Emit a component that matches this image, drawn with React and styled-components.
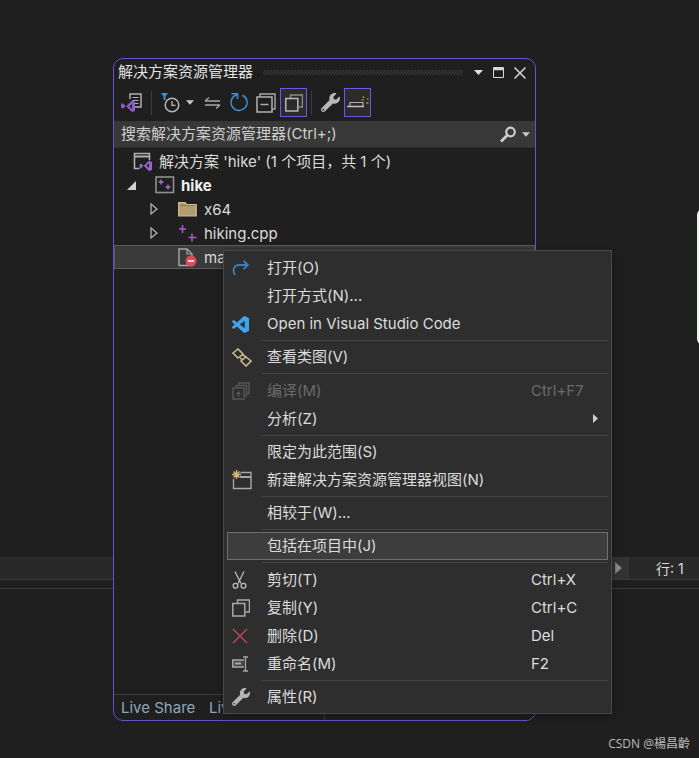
import React from 'react';
import styled, { createGlobalStyle } from 'styled-components';
import { FaWrench } from 'react-icons/fa';

const GlobalStyle = createGlobalStyle`
  html, body {
    margin: 0;
    padding: 0;
    background: #1f1f1f;
  }
  body {
    font-family: Inter, "Noto Sans CJK SC", sans-serif;
    font-size: 15px;
    color: #d6d6d6;
  }
`;

const Desktop = styled.div`
  position: relative;
  width: 699px;
  height: 758px;
  overflow: hidden;
  background: #1f1f1f;
  display: flex;
  flex-direction: column;
`;

const StatusBar = styled.div`
  margin-top: 557px;
  height: 22px;
  background: #292929;
  border-bottom: 1px solid #3a3a3a;
  box-sizing: content-box;
  display: flex;
  justify-content: flex-end;
`;

const ScrollEnd = styled.div`
  width: 17px;
  background: #333333;
  display: flex;
  align-items: center;
  padding-left: 3px;
  box-sizing: border-box;
`;

const LineInfo = styled.div`
  width: 70px;
  padding-left: 27px;
  box-sizing: border-box;
  line-height: 23px;
  font-size: 14px;
  color: #dcdcdc;
`;

const OutputEdge = styled.div`
  margin-top: 8px;
  border-top: 1px solid #3a3a3a;
  flex: 1;
  position: relative;
`;

const Watermark = styled.div`
  position: absolute;
  right: 9px;
  bottom: 5px;
  font-size: 12px;
  line-height: 18px;
  color: #bcbcbc;
  font-family: "Open Sans", "Noto Sans CJK TC", sans-serif;
`;

const WindowSliver = styled.div`
  position: absolute;
  left: 697px;
  top: 209px;
  width: 12px;
  height: 136px;
  background: #eef1ee;
  border-radius: 8px;
`;

const ToolWindow = styled.div`
  position: absolute;
  left: 113px;
  top: 58px;
  width: 423px;
  height: 663px;
  box-sizing: border-box;
  border: 1px solid #6552c9;
  border-radius: 10px;
  background: #1f1f1f;
  display: flex;
  flex-direction: column;
  overflow: hidden;
`;

const TitleBar = styled.div`
  height: 27px;
  display: flex;
  align-items: center;
  padding: 0 8px 0 4px;
  color: #e2e2e2;
`;

const TitleText = styled.div`
  width: 145px;
  white-space: nowrap;
  line-height: 24px;
  margin-top: -2px;
`;

const Grip = styled.div`
  width: 200px;
  height: 5px;
  background-image:
    linear-gradient(45deg, #3f3f3f 25%, transparent 25%, transparent 75%, #3f3f3f 75%),
    linear-gradient(45deg, #3f3f3f 25%, transparent 25%, transparent 75%, #3f3f3f 75%);
  background-size: 3px 3px;
  background-position: 0 0, 1.5px 1.5px;
`;

const TitleIcons = styled.div`
  margin-left: 11px;
  display: flex;
  align-items: center;
  gap: 10px;
`;

const Toolbar = styled.div`
  height: 33px;
  padding-left: 6px;
  display: flex;
  align-items: center;
`;

const ToolButton = styled.div`
  width: ${p => p.$w}px;
  height: 29px;
  box-sizing: border-box;
  display: flex;
  align-items: center;
  justify-content: center;
  border: 1px solid ${p => (p.$on ? '#6a5ae0' : 'transparent')};
  background: ${p => (p.$on ? '#2b2b2b' : 'transparent')};
`;

const ToolSep = styled.div`
  width: 1px;
  height: 24px;
  margin: 0 ${p => p.$m}px;
  background: #3d3d3d;
`;

const SearchBar = styled.div`
  height: 26px;
  margin-top: 2px;
  background: #383838;
  border-bottom: 1px solid #2b2b2b;
  display: flex;
  align-items: center;
  padding: 0 5px 0 7px;
  color: #cfcfcf;
`;

const SearchText = styled.div`
  flex: 1;
  white-space: nowrap;
  line-height: 24px;
`;

const SearchIcons = styled.div`
  display: flex;
  align-items: center;
  gap: 5px;
`;

const Tree = styled.div`
  flex: 1;
  padding-top: 1px;
`;

const TreeRow = styled.div`
  height: 24px;
  box-sizing: border-box;
  padding-left: ${p => p.$indent}px;
  display: flex;
  align-items: center;
  white-space: nowrap;
  font-weight: ${p => (p.$bold ? 700 : 400)};
  color: ${p => (p.$bold ? '#f0f0f0' : '#dcdcdc')};
  background: ${p => (p.$selected ? '#3a3a3a' : 'transparent')};
  border: 1px solid ${p => (p.$selected ? '#5a5a5a' : 'transparent')};
`;

const TreeLabel = styled.span`
  line-height: 22px;
  padding-top: 2px;
`;

const Expander = styled.div`
  width: 28px;
  display: flex;
  align-items: center;
`;

const TreeIcon = styled.div`
  width: 26px;
  display: flex;
  align-items: center;
`;

const TabStrip = styled.div`
  height: 25px;
  border-top: 1px solid #3c3c3c;
  display: flex;
  align-items: center;
  color: #8fa7bb;
`;

const Tab = styled.div`
  width: ${p => p.$w}px;
  padding-left: 7px;
  box-sizing: border-box;
  white-space: nowrap;
  overflow: hidden;
  flex-shrink: 0;
`;

const ActiveTab = styled.div`
  flex: 1;
  height: 100%;
  border-left: 1px solid #3c3c3c;
  background: #1f1f1f;
`;

const Menu = styled.div`
  position: absolute;
  left: 223px;
  top: 250px;
  width: 389px;
  height: 464px;
  box-sizing: border-box;
  padding: 3px;
  background: #2e2e2e;
  border: 1px solid #484848;
  box-shadow: 0 2px 8px rgba(0, 0, 0, 0.35);
`;

const Item = styled.div`
  height: 28px;
  box-sizing: border-box;
  display: flex;
  align-items: center;
  white-space: nowrap;
  color: ${p => (p.$disabled ? '#6a6a6a' : '#dcdcdc')};
  background: ${p => (p.$hot ? '#3d3d3d' : 'transparent')};
  border: 1px solid ${p => (p.$hot ? '#6e6e6e' : 'transparent')};
`;

const ItemIcon = styled.div`
  width: 39px;
  padding-left: 4px;
  box-sizing: border-box;
  display: flex;
  align-items: center;
  flex-shrink: 0;
`;

const ItemLabel = styled.div`
  flex: 1;
  line-height: 22px;
`;

const Shortcut = styled.div`
  width: 76px;
  line-height: 22px;
  display: flex;
  align-items: center;
  justify-content: ${p => (p.$arrow ? 'flex-end' : 'flex-start')};
  padding-right: ${p => (p.$arrow ? 9 : 0)}px;
  box-sizing: border-box;
`;

const MenuSep = styled.div`
  height: 5.25px;
  margin-left: 35px;
  display: flex;
  align-items: center;
  &::after {
    content: '';
    flex: 1;
    height: 1px;
    background: #444444;
  }
`;

const Caret = ({ color = '#c8c8c8', w = 9 }) => (
  <svg width={w} height="5" viewBox="0 0 9 5"><path d="M0 0h9L4.5 5z" fill={color} /></svg>
);

const VsCode = () => (
  <svg width="17" height="17" viewBox="0 0 24 24">
    <path fill="#3fa4ec" d="M23.15 2.587L18.21.21a1.494 1.494 0 0 0-1.705.29l-9.46 8.63-4.12-3.128a.999.999 0 0 0-1.276.057L.327 7.261A1 1 0 0 0 .326 8.74L3.899 12 .326 15.26a1 1 0 0 0 .001 1.479L1.65 17.94a.999.999 0 0 0 1.276.057l4.12-3.128 9.46 8.63a1.492 1.492 0 0 0 1.704.29l4.942-2.377A1.5 1.5 0 0 0 24 20.06V3.939a1.5 1.5 0 0 0-.85-1.352zm-5.146 14.861L10.826 12l7.178-5.448v10.896z" />
  </svg>
);

const Solution = () => (
  <svg width="21" height="20" viewBox="0 0 21 20" fill="none">
    <path d="M1.5 14V2.5h15V9" stroke="#b0b0b0" strokeWidth="1.6" />
    <path d="M1.5 14v3.5h5" stroke="#b0b0b0" strokeWidth="1.6" />
    <path d="M2 5.5h14" stroke="#b0b0b0" strokeWidth="2" />
    <path d="M8 12.5l2.5 2.5L16 9.5l3 1.5v8l-3 1-5.5-5.5L8 17.5l-1.5-1v-3z" fill="#9a63c9" />
    <path d="M16 12l-2.5 2.5L16 17z" fill="#1f1f1f" />
  </svg>
);

const ProjectIcon = () => (
  <svg width="20" height="18" viewBox="0 0 20 18" fill="none">
    <rect x="1" y="1" width="17.5" height="15.5" stroke="#8f8f8f" strokeWidth="1.6" />
    <path d="M6 3.5v5M3.5 6h5M13 8.5v5M10.5 11h5" stroke="#b06ed2" strokeWidth="1.4" />
  </svg>
);

const Folder = () => (
  <svg width="19" height="16" viewBox="0 0 19 16">
    <path d="M.7 15V1.5h6.5l1.5 2h9.5V15z" fill="#b09d72" stroke="#d6c08d" strokeWidth="1.2" />
    <path d="M1.5 4.5h16" stroke="#8b7a52" />
  </svg>
);

const CppIcon = () => (
  <svg width="20" height="18" viewBox="0 0 20 18" fill="none">
    <path d="M4.5 1v8M1 5h7" stroke="#a860c8" strokeWidth="1.5" />
    <path d="M14 9.5v8M10.5 13.5h8" stroke="#a860c8" strokeWidth="1.5" />
  </svg>
);

const ExcludedFile = () => (
  <svg width="19" height="19" viewBox="0 0 19 19" fill="none">
    <path d="M1 1h8l5 5v11.5H1z" stroke="#a8a8a8" strokeWidth="1.4" />
    <path d="M9 1v5h5" stroke="#a8a8a8" strokeWidth="1.2" />
    <circle cx="13" cy="13" r="5.5" fill="#e0485c" />
    <path d="M10 13h6" stroke="#f4f4f4" strokeWidth="1.8" />
  </svg>
);

const Open = () => (
  <svg width="18" height="16" viewBox="0 0 18 16" fill="none">
    <path d="M16 5H7C3.5 5 1.5 7.5 1.5 10.5c0 1.5.5 3 1.5 4.5" stroke="#3f7fc0" strokeWidth="1.8" />
    <path d="M11.5 .8L16 5l-4.5 4.2" stroke="#3f7fc0" strokeWidth="1.8" />
  </svg>
);

const ClassDiagram = () => (
  <svg width="20" height="19" viewBox="0 0 20 19" fill="none" stroke="#c9b88e" strokeWidth="1.6">
    <path d="M1 5l5-4 5 5-5 4z" />
    <path d="M9 13l5-4 5 4-5 5z" />
    <path d="M10 6.5l4 2.5M8 10l2.5 1.5" />
  </svg>
);

const Compile = () => (
  <svg width="18" height="18" viewBox="0 0 18 18" fill="none" stroke="#555555" strokeWidth="1.5">
    <path d="M1 6h11v11H1z" />
    <path d="M4 6V3.5h10.5V14H12M7 3V1h10v10.5h-2.5" />
    <path d="M6.5 15v-5M4.5 12l2-2 2 2" />
  </svg>
);

const NewView = () => (
  <svg width="20" height="20" viewBox="0 0 20 20" fill="none">
    <path d="M8.5 2.5H19V18.5H1.5V9" stroke="#a8a8a8" strokeWidth="1.4" />
    <path d="M8 7h11" stroke="#a8a8a8" strokeWidth="2" />
    <path d="M4.5 0v9M0 4.5h9M1.5 1.5l6 6M7.5 1.5l-6 6" stroke="#d3b975" strokeWidth="1.4" />
  </svg>
);

const Scissors = () => (
  <svg width="15" height="18" viewBox="0 0 15 18" fill="none" stroke="#bdbdbd" strokeWidth="1.3">
    <path d="M3 .5l6 12M12 .5l-6 12" />
    <circle cx="3.5" cy="14.8" r="2.4" />
    <circle cx="11.5" cy="14.8" r="2.4" />
  </svg>
);

const CopyIcon = ({ stroke = '#a8a8a8', back = '#a8a8a8' }) => (
  <svg width="18" height="18" viewBox="0 0 18 18" fill="none" strokeWidth="1.5">
    <path d="M5.5 4V1h12v12h-4" stroke={back} />
    <rect x=".8" y="4.5" width="12" height="12.5" stroke={stroke} />
  </svg>
);

const Cross = () => (
  <svg width="16" height="16" viewBox="0 0 16 16" fill="none">
    <path d="M1 1l14 14M15 1L1 15" stroke="#c8475a" strokeWidth="1.4" />
  </svg>
);

const Rename = () => (
  <svg width="19" height="16" viewBox="0 0 19 16" fill="none" stroke="#a8a8a8">
    <path d="M12 4H.8v7H12" strokeWidth="1.5" fill="#484848" />
    <path d="M3 7.5h6" strokeWidth="2" />
    <path d="M11 1h5M13.5 1v14M11 15h5" strokeWidth="1.3" />
  </svg>
);

const SyncVs = () => (
  <svg width="22" height="20" viewBox="0 0 22 20" fill="none">
    <path d="M9 6V1h11v13h-6" stroke="#b0b0b0" strokeWidth="1.5" />
    <path d="M11.5 4.5h6M11.5 7.5h6M14 10.5h3.5" stroke="#b0b0b0" />
    <path d="M2 10.5l3 3 6-6 3 1.5v9l-3 1-6-6-3 2.5-2-1v-4z" fill="#8c5cc4" />
    <path d="M11 11l-2.5 2.5L11 16z" fill="#1f1f1f" />
  </svg>
);

const ClockFilter = () => (
  <svg width="20" height="20" viewBox="0 0 20 20" fill="none">
    <circle cx="11" cy="12" r="6.8" stroke="#b8b8b8" strokeWidth="1.5" />
    <path d="M11 8v4.3h3.5" stroke="#b8b8b8" strokeWidth="1.3" />
    <path d="M0 0h7L4.5 3.5V7h-2V3.5z" fill="#3f8fd0" />
  </svg>
);

const SyncArrows = () => (
  <svg width="17" height="12" viewBox="0 0 17 12" fill="none" stroke="#a8a8a8" strokeWidth="1.3">
    <path d="M1 4h15M1 4l4-3.5" />
    <path d="M16 8H1M16 8l-4 3.5" />
  </svg>
);

const Refresh = () => (
  <svg width="19" height="19" viewBox="0 0 19 19" fill="none" stroke="#3f8fd0" strokeWidth="1.5">
    <path d="M7 1.8A8 8 0 1 0 12.5 2.3" />
    <path d="M1.5 .8h6V6" />
  </svg>
);

const Collapse = () => (
  <svg width="20" height="20" viewBox="0 0 20 20" fill="none" stroke="#a8a8a8">
    <path d="M4 4V1h15v15h-3" strokeWidth="1.4" />
    <rect x="1" y="4" width="15" height="15" strokeWidth="1.6" />
    <path d="M4.5 11.5h8" strokeWidth="1.5" />
  </svg>
);

const Lamp = () => (
  <svg width="22" height="15" viewBox="0 0 22 15" fill="none">
    <path d="M3 11V7.5h13V11" stroke="#b0b0b0" strokeWidth="1.2" />
    <path d="M0 11.5h17" stroke="#c0c0c0" strokeWidth="1.6" />
    <path d="M16 1.5l1 1.5M20 4h1.5M14.5 5h2M19 8h2.5" stroke="#d7b75e" strokeWidth="1.2" />
  </svg>
);

const Magnifier = () => (
  <svg width="17" height="17" viewBox="0 0 17 17" fill="none">
    <circle cx="10.5" cy="6" r="4.3" stroke="#cfcfcf" strokeWidth="2.2" />
    <path d="M7 9.5l-6 6" stroke="#cfcfcf" strokeWidth="2.8" />
  </svg>
);

const ArrowOpen = () => (
  <svg width="9" height="9" viewBox="0 0 9 9"><path d="M9 0v9H0z" fill="#d0d0d0" /></svg>
);

const ArrowClosed = () => (
  <svg width="8" height="12" viewBox="0 0 8 12" fill="none"><path d="M1 1l6 5-6 5z" stroke="#b0b0b0" strokeWidth="1.3" /></svg>
);

const ArrowRight = ({ color = '#d0d0d0', w = 5, h = 9 }) => (
  <svg width={w} height={h} viewBox="0 0 5 9"><path d="M0 0l5 4.5L0 9z" fill={color} /></svg>
);

const groups = [
  [
    { label: '打开(O)', icon: <Open /> },
    { label: '打开方式(N)...' },
    { label: 'Open in Visual Studio Code', icon: <VsCode /> },
  ],
  [{ label: '查看类图(V)', icon: <ClassDiagram /> }],
  [
    { label: '编译(M)', icon: <Compile />, shortcut: 'Ctrl+F7', disabled: true },
    { label: '分析(Z)', arrow: true },
  ],
  [
    { label: '限定为此范围(S)' },
    { label: '新建解决方案资源管理器视图(N)', icon: <NewView /> },
  ],
  [{ label: '相较于(W)...' }],
  [{ label: '包括在项目中(J)', hot: true }],
  [
    { label: '剪切(T)', icon: <Scissors />, shortcut: 'Ctrl+X' },
    { label: '复制(Y)', icon: <CopyIcon />, shortcut: 'Ctrl+C' },
    { label: '删除(D)', icon: <Cross />, shortcut: 'Del' },
    { label: '重命名(M)', icon: <Rename />, shortcut: 'F2' },
  ],
  [{ label: '属性(R)', icon: <FaWrench size={18} color="#b4b4b4" /> }],
];

const App = () => (
  <Desktop>
    <GlobalStyle />
    <StatusBar>
      <ScrollEnd><ArrowRight color="#8a8a8a" w={7} h={12} /></ScrollEnd>
      <LineInfo>行: 1</LineInfo>
    </StatusBar>
    <OutputEdge>
      <Watermark>CSDN @楊昌齡</Watermark>
    </OutputEdge>
    <WindowSliver />

    <ToolWindow>
      <TitleBar>
        <TitleText>解决方案资源管理器</TitleText>
        <Grip />
        <TitleIcons>
          <Caret color="#e0e0e0" />
          <svg width="11" height="11" viewBox="0 0 11 11" fill="none" stroke="#d8d8d8">
            <path d="M.5 .5h10v10H.5z" />
            <path d="M.5 2h10" strokeWidth="2.4" />
          </svg>
          <svg width="12" height="12" viewBox="0 0 12 12" fill="none" stroke="#d8d8d8" strokeWidth="1.5">
            <path d="M.5 .5l11 11M11.5 .5l-11 11" />
          </svg>
        </TitleIcons>
      </TitleBar>
      <Toolbar>
        <ToolButton $w={24}><SyncVs /></ToolButton>
        <ToolSep $m={7} />
        <ToolButton $w={24}><ClockFilter /></ToolButton>
        <ToolButton $w={14}><Caret w={8} /></ToolButton>
        <ToolButton $w={30}><SyncArrows /></ToolButton>
        <ToolButton $w={24}><Refresh /></ToolButton>
        <ToolButton $w={29}><Collapse /></ToolButton>
        <ToolButton $w={27} $on><CopyIcon stroke="#b8b8b8" back="#8c8c8c" /></ToolButton>
        <ToolSep $m={4} />
        <ToolButton $w={28}><FaWrench size={19} color="#b8b8b8" /></ToolButton>
        <ToolButton $w={27} $on><Lamp /></ToolButton>
      </Toolbar>
      <SearchBar>
        <SearchText>搜索解决方案资源管理器(Ctrl+;)</SearchText>
        <SearchIcons>
          <Magnifier />
          <Caret w={8} />
        </SearchIcons>
      </SearchBar>
      <Tree>
        <TreeRow $indent={18}>
          <TreeIcon><Solution /></TreeIcon>
          <TreeLabel>解决方案 'hike' (1 个项目，共 1 个)</TreeLabel>
        </TreeRow>
        <TreeRow $indent={12} $bold>
          <Expander><ArrowOpen /></Expander>
          <TreeIcon><ProjectIcon /></TreeIcon>
          <TreeLabel>hike</TreeLabel>
        </TreeRow>
        <TreeRow $indent={35}>
          <Expander><ArrowClosed /></Expander>
          <TreeIcon><Folder /></TreeIcon>
          <TreeLabel>x64</TreeLabel>
        </TreeRow>
        <TreeRow $indent={35}>
          <Expander><ArrowClosed /></Expander>
          <TreeIcon><CppIcon /></TreeIcon>
          <TreeLabel>hiking.cpp</TreeLabel>
        </TreeRow>
        <TreeRow $indent={35} $selected>
          <Expander />
          <TreeIcon><ExcludedFile /></TreeIcon>
          <TreeLabel>main.cpp</TreeLabel>
        </TreeRow>
      </Tree>
      <TabStrip>
        <Tab $w={88}>Live Share</Tab>
        <Tab $w={122}>Live Visual Tree</Tab>
        <ActiveTab />
      </TabStrip>
    </ToolWindow>

    <Menu>
      {groups.map((group, i) => (
        <React.Fragment key={i}>
          {i > 0 && <MenuSep />}
          {group.map(item => (
            <Item key={item.label} $hot={item.hot} $disabled={item.disabled}>
              <ItemIcon>{item.icon}</ItemIcon>
              <ItemLabel>{item.label}</ItemLabel>
              {item.shortcut && <Shortcut>{item.shortcut}</Shortcut>}
              {item.arrow && <Shortcut $arrow><ArrowRight /></Shortcut>}
            </Item>
          ))}
        </React.Fragment>
      ))}
    </Menu>
  </Desktop>
);

export default App;
